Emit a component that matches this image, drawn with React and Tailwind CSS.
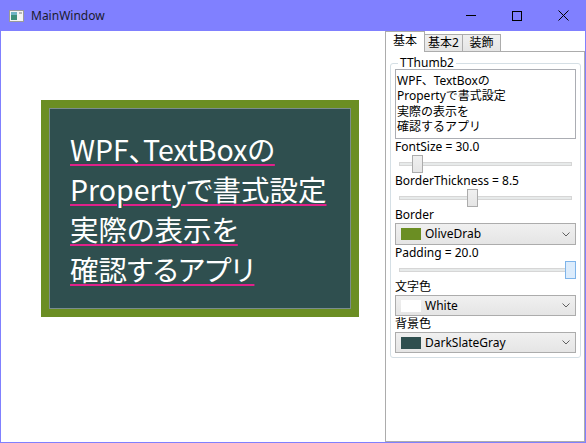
import React from 'react';

const ui = { fontFamily: '"Noto Sans", "Noto Sans CJK JP", sans-serif' };
const big = { fontFamily: '"Noto Sans CJK JP", sans-serif' };

function AppIcon() {
  return (
    <svg width="15" height="12" viewBox="0 0 15 12">
      <rect x="0.5" y="0.5" width="14" height="11" fill="#f4f4f4" stroke="#9a9a9a" />
      <rect x="2" y="2" width="6" height="8" fill="#3d8f7a" />
      <rect x="2" y="2" width="6" height="3" fill="#6fb4c4" />
      <rect x="10" y="2" width="3" height="2" fill="#b8b8b8" />
    </svg>
  );
}

function Chevron() {
  return (
    <svg width="8" height="5" viewBox="0 0 8 5">
      <path d="M0.5 0.5 L4 4 L7.5 0.5" fill="none" stroke="#606060" strokeWidth="1" />
    </svg>
  );
}

function Slider({ thumb, active }) {
  return (
    <div className="relative h-[18px] flex items-center">
      <div className="mx-[4px] flex-1 h-[4px] bg-[#e7eaea] border border-[#d6d6d6]" />
      <div
        className={
          active
            ? 'absolute top-0 w-[11px] h-[18px] bg-[#dcecfc] border border-[#7eb4ea]'
            : 'absolute top-0 w-[11px] h-[18px] bg-gradient-to-b from-[#f0f0f0] to-[#e5e5e5] border border-[#acacac]'
        }
        style={{ left: thumb }}
      />
    </div>
  );
}

function Combo({ color, label, h }) {
  return (
    <div
      className={
        (h === 22 ? 'h-[22px] ' : 'h-[21px] ') +
        'flex items-center border border-[#acacac] bg-gradient-to-b from-[#f0f0f0] to-[#e5e5e5] pl-[5px] pr-[5px]'
      }
    >
      <div className="w-[20px] h-[12px]" style={{ backgroundColor: color }} />
      <span className="ml-[4px] flex-1 text-[12px] leading-[16px] text-black">{label}</span>
      <Chevron />
    </div>
  );
}

function Label({ children }) {
  return <div className="h-[16px] text-[12px] leading-[16px] text-black whitespace-nowrap">{children}</div>;
}

const lines = ['WPF、TextBoxの', 'Propertyで書式設定', '実際の表示を', '確認するアプリ'];

export default function App() {
  return (
    <div className="w-[586px] h-[443px] bg-[#8080ff] flex flex-col overflow-hidden" style={ui}>
      <div className="h-[31px] flex items-center">
        <div className="ml-[9px] flex items-center">
          <AppIcon />
        </div>
        <span className="ml-[7px] text-[12px] text-[#1a1a2e]">MainWindow</span>
        <div className="ml-auto flex h-full">
          <div className="w-[46px] flex items-center justify-center">
            <div className="w-[10px] h-px bg-black" />
          </div>
          <div className="w-[46px] flex items-center justify-center">
            <div className="w-[10px] h-[10px] border border-black" />
          </div>
          <div className="w-[46px] flex items-center justify-center">
            <svg width="11" height="11" viewBox="0 0 11 11">
              <path d="M0.5 0.5 L10.5 10.5 M10.5 0.5 L0.5 10.5" stroke="#000" strokeWidth="1" />
            </svg>
          </div>
        </div>
      </div>

      <div className="flex-1 mx-px mb-px bg-white flex min-h-0">
        <div className="flex-1 pl-[40px] pt-[69px]">
          <div className="w-[318px] h-[217px] border-8 border-[#6b8e23]">
            <div className="h-full border border-[#7b8d8d] bg-[#2f4f4f] p-[20px] text-white text-[28.5px] leading-[40px] [font-feature-settings:'palt']" style={big}>
              {lines.map((l) => (
                <div key={l} className="whitespace-nowrap">
                  <span className="underline decoration-[#e0218a] decoration-2 underline-offset-[3px]">{l}</span>
                </div>
              ))}
            </div>
          </div>
        </div>

        <div className="w-[200px] flex flex-col">
          <div className="h-[20px] flex items-end text-[12px]">
            <div className="relative z-10 w-[40px] h-[21px] -mb-px bg-white border-x border-t border-[#acacac] flex items-center justify-center pb-[2px]">
              基本
            </div>
            <div className="-ml-px w-[39px] h-[17px] bg-gradient-to-b from-[#f0f0f0] to-[#e5e5e5] border-x border-t border-[#acacac] flex items-center justify-center">
              基本2
            </div>
            <div className="-ml-px w-[39px] h-[17px] bg-gradient-to-b from-[#f0f0f0] to-[#e5e5e5] border-x border-t border-[#acacac] flex items-center justify-center">
              装飾
            </div>
          </div>
          <div className="flex-1 border border-[#acacac] bg-white pt-[5px] pl-[4px] pr-[3px]">
            <fieldset className="border border-[#d5dfe5] rounded-[3px] px-[4px] pb-[4px]">
              <legend className="ml-[3px] px-[2px] text-[12px] leading-[12px] text-black">TThumb2</legend>
              <div className="h-[70px] border border-[#abadb3] pl-[1px] pt-[3px] text-[12px] leading-[15.4px] text-black whitespace-nowrap">
                {lines.map((l) => (
                  <div key={l}>{l}</div>
                ))}
              </div>
              <Label>FontSize = 30.0</Label>
              <Slider thumb={17} />
              <Label>BorderThickness = 8.5</Label>
              <Slider thumb={72} />
              <Label>Border</Label>
              <Combo color="#6b8e23" label="OliveDrab" h={22} />
              <Label>Padding = 20.0</Label>
              <Slider thumb={170} active />
              <Label>文字色</Label>
              <Combo color="#ffffff" label="White" h={21} />
              <Label>背景色</Label>
              <Combo color="#2f4f4f" label="DarkSlateGray" h={21} />
            </fieldset>
          </div>
        </div>
      </div>
    </div>
  );
}
